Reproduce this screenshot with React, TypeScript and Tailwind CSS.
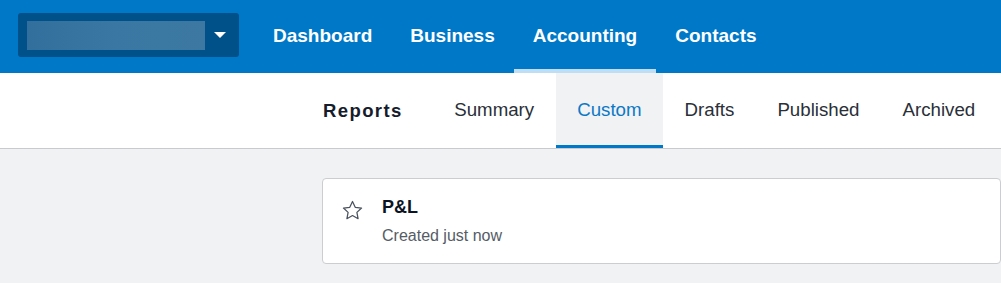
import React from "react";

function Star() {
  return (
    <svg width="23" height="23" viewBox="0 0 24 24" fill="none" stroke="#4a5260" strokeWidth="1.3" strokeLinejoin="round">
      <path d="M12 2.6l2.85 6.05 6.6.8-4.87 4.55 1.25 6.55L12 17.3l-5.83 3.25 1.25-6.55L2.55 9.45l6.6-.8z" />
    </svg>
  );
}

export default function App() {
  const nav = ["Dashboard", "Business", "Accounting", "Contacts"];
  const tabs = ["Summary", "Custom", "Drafts", "Published", "Archived"];
  return (
    <div className="w-[1001px] h-[283px] overflow-hidden bg-[#f1f2f4]" style={{ fontFamily: '"Liberation Sans", Arial, sans-serif' }}>
      <header className="h-[73px] bg-[#0078c8] flex items-start">
        <div className="ml-[18px] mt-[13px] w-[221px] h-[44px] rounded-[3px] bg-[#00508a] flex items-center pl-[9px]">
          <div className="w-[178px] h-[29px] bg-gradient-to-r from-[#336f9c] via-[#3a78a3] to-[#3c78a1] blur-[0.5px]" />
          <svg className="ml-[9px]" width="12" height="6" viewBox="0 0 12 6">
            <path d="M0 0h12L6 6z" fill="#ffffff" />
          </svg>
        </div>
        <nav className="ml-[15px] flex h-full">
          {nav.map((n) => (
            <div key={n} className="relative px-[19px] h-full flex items-center">
              <span className="text-white font-bold text-[19px] leading-none -mt-[3px]">{n}</span>
              {n === "Accounting" && <div className="absolute left-0 right-0 bottom-0 h-[4px] bg-[#bfdef3]" />}
            </div>
          ))}
        </nav>
      </header>
      <div className="h-[76px] bg-white border-b border-[#c8cacd] flex items-stretch pl-[323px]">
        <div className="flex items-center text-[18.5px] tracking-[1.4px] font-bold text-[#161c2b] mr-[30px]">Reports</div>
        {tabs.map((t) => {
          const active = t === "Custom";
          return (
            <div
              key={t}
              className={
                active
                  ? "px-[21.5px] flex items-center text-[18.7px] text-[#0b78c6] bg-[#f1f2f4] border-b-[3px] border-[#0078c8] pt-[3px]"
                  : "px-[21.5px] flex items-center text-[18.7px] text-[#2a2f38]"
              }
            >
              {t}
            </div>
          );
        })}
      </div>
      <div className="pl-[322px] pt-[29px]">
        <div className="h-[86px] bg-white border border-[#cbcdd0] rounded-[4px] flex items-start pt-[18px] pl-[18px]">
          <div className="pt-[2px]">
            <Star />
          </div>
          <div className="ml-[18px]">
            <div className="text-[18px] font-bold text-[#0c1424] leading-[20px]">P&amp;L</div>
            <div className="text-[16px] text-[#555c66] mt-[10px] leading-[18px]">Created just now</div>
          </div>
        </div>
      </div>
    </div>
  );
}
